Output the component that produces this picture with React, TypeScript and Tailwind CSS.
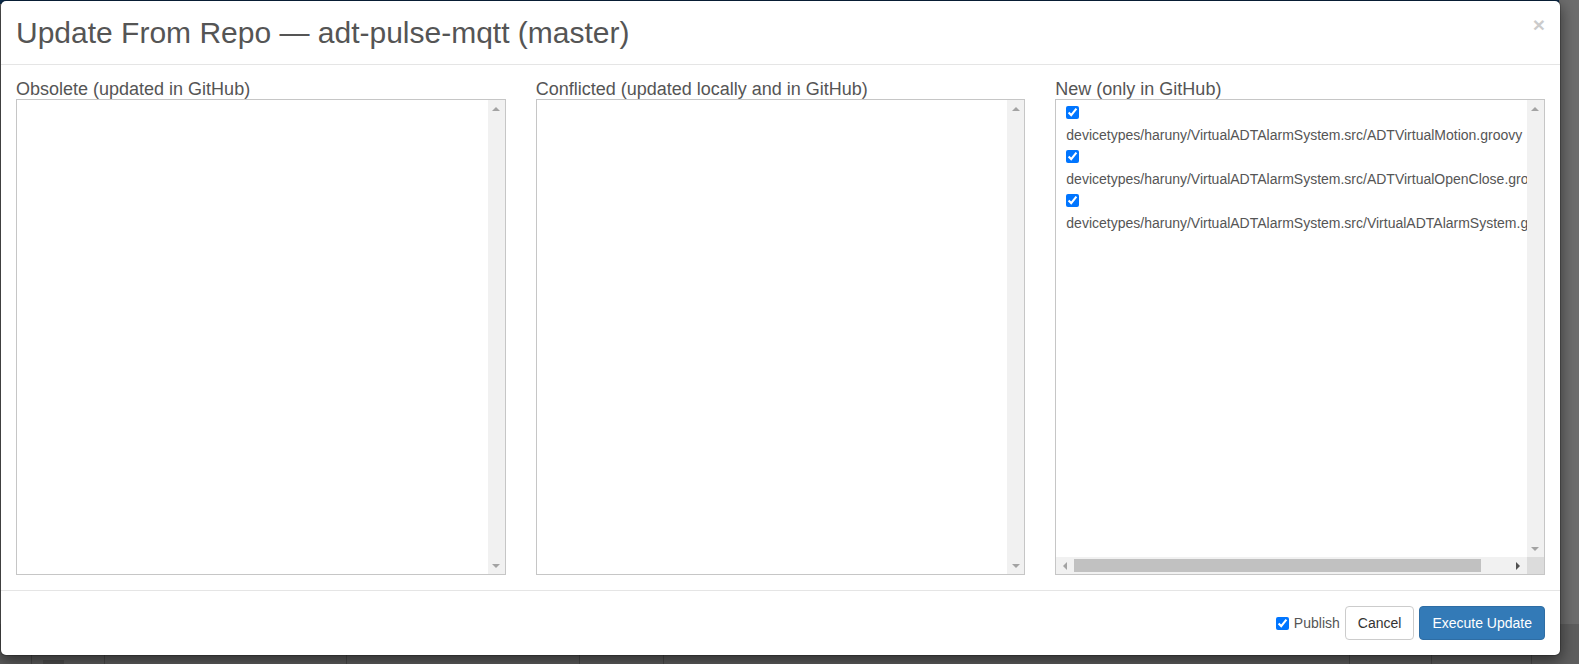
import type { ReactNode } from 'react'

const NEW_FILES = [
  'devicetypes/haruny/VirtualADTAlarmSystem.src/ADTVirtualMotion.groovy',
  'devicetypes/haruny/VirtualADTAlarmSystem.src/ADTVirtualOpenClose.groovy',
  'devicetypes/haruny/VirtualADTAlarmSystem.src/VirtualADTAlarmSystem.groovy',
]

// widths of the table columns behind the backdrop
const PAGE_COLS = [32, 73, 242, 233, 84, 686, 82, 100]

function Arrow({ dir, dark }: { dir: 'up' | 'down' | 'left' | 'right'; dark?: boolean }) {
  const fill = dark ? '#505050' : '#a3a3a3'
  if (dir === 'up' || dir === 'down') {
    return (
      <svg width="8" height="4" viewBox="0 0 8 4">
        <path d={dir === 'up' ? 'M0 4 L4 0 L8 4 Z' : 'M0 0 L8 0 L4 4 Z'} fill={fill} />
      </svg>
    )
  }
  return (
    <svg width="4" height="8" viewBox="0 0 4 8">
      <path d={dir === 'left' ? 'M4 0 L4 8 L0 4 Z' : 'M0 0 L4 4 L0 8 Z'} fill={fill} />
    </svg>
  )
}

function VBar() {
  return (
    <div className="w-[17px] shrink-0 bg-[#f1f1f1] flex flex-col justify-between">
      <div className="h-[17px] flex items-center justify-center">
        <Arrow dir="up" />
      </div>
      <div className="h-[17px] flex items-center justify-center">
        <Arrow dir="down" />
      </div>
    </div>
  )
}

function HBar() {
  return (
    <div className="h-[17px] shrink-0 flex bg-[#f1f1f1]">
      <div className="w-[17px] flex items-center justify-center">
        <Arrow dir="left" />
      </div>
      <div className="flex-1 flex items-center pl-[1px]">
        <div className="w-[407px] h-[13px] bg-[#c1c1c1]" />
      </div>
      <div className="w-[17px] flex items-center justify-center">
        <Arrow dir="right" dark />
      </div>
      <div className="w-[17px] bg-[#dcdcdc]" />
    </div>
  )
}

function ScrollBox({ children, hscroll }: { children?: ReactNode; hscroll?: boolean }) {
  return (
    <div className="h-[476px] border border-[#c6c6c6] bg-white flex flex-col">
      <div className="flex flex-1 min-h-0">
        <div className="flex-1 min-w-0 overflow-hidden">{children}</div>
        <VBar />
      </div>
      {hscroll && <HBar />}
    </div>
  )
}

function Column({ title, children, hscroll }: { title: string; children?: ReactNode; hscroll?: boolean }) {
  return (
    <div className="min-w-0">
      <div className="text-[18px] leading-[19px] text-[#555]">{title}</div>
      <ScrollBox hscroll={hscroll}>{children}</ScrollBox>
    </div>
  )
}

export default function App() {
  return (
    <div className="relative w-[1579px] h-[664px] overflow-hidden bg-[#6d6d6d] flex flex-col font-['Liberation_Sans',Arial,sans-serif]">
      {/* page behind the backdrop */}
      <div className="w-[1559px] h-[4px] bg-[#0c2c4d]" />
      <div className="flex-1" />
      <div className="h-[40px] flex bg-[#5e5e5e]">
        {PAGE_COLS.map((w, i) => (
          <div key={i} className="h-full border-r border-[#4a4a4a] relative" style={{ width: w }}>
            {i === 1 && <div className="absolute left-[11px] bottom-0 w-[21px] h-[4px] bg-[#4f4f4f]" />}
          </div>
        ))}
      </div>

      {/* modal */}
      <div className="absolute left-0 top-0 w-[1561px] h-[656px] rounded-[6px] border border-black/20 bg-white bg-clip-padding shadow-[0_5px_15px_rgba(0,0,0,0.5)] flex flex-col">
        <div className="px-[15px] py-[15px] border-b border-[#e5e5e5] flex items-start justify-between">
          <h4 className="text-[30px] leading-[33px] text-[#555] font-normal">
            Update From Repo — adt-pulse-mqtt (master)
          </h4>
          <button type="button" className="text-[21px] leading-none font-bold text-black opacity-20 -mt-[2px]">
            ×
          </button>
        </div>

        <div className="px-[15px] py-[15px] grid grid-cols-3 gap-x-[30px]">
          <Column title="Obsolete (updated in GitHub)" />
          <Column title="Conflicted (updated locally and in GitHub)" />
          <Column title="New (only in GitHub)" hscroll>
            <div className="pl-[10px] pt-[6px] w-max">
              {NEW_FILES.map((f) => (
                <div key={f} className="pb-[5px]">
                  <input type="checkbox" defaultChecked className="block w-[13px] h-[13px] m-0" />
                  <div className="mt-[6px] text-[14px] leading-[20px] text-[#555] whitespace-nowrap">{f}</div>
                </div>
              ))}
            </div>
          </Column>
        </div>

        <div className="mt-auto border-t border-[#e5e5e5] p-[15px] flex items-center justify-end">
          <label className="flex items-center gap-[5px] text-[14px] text-[#555] mr-[5px]">
            <input type="checkbox" defaultChecked className="w-[13px] h-[13px] m-0" />
            Publish
          </label>
          <button
            type="button"
            className="h-[34px] px-[12px] text-[14px] leading-[20px] text-[#333] bg-white border border-[#ccc] rounded-[4px]"
          >
            Cancel
          </button>
          <button
            type="button"
            className="ml-[5px] h-[34px] px-[12px] text-[14px] leading-[20px] text-white bg-[#337ab7] border border-[#2e6da4] rounded-[4px]"
          >
            Execute Update
          </button>
        </div>
      </div>
    </div>
  )
}
